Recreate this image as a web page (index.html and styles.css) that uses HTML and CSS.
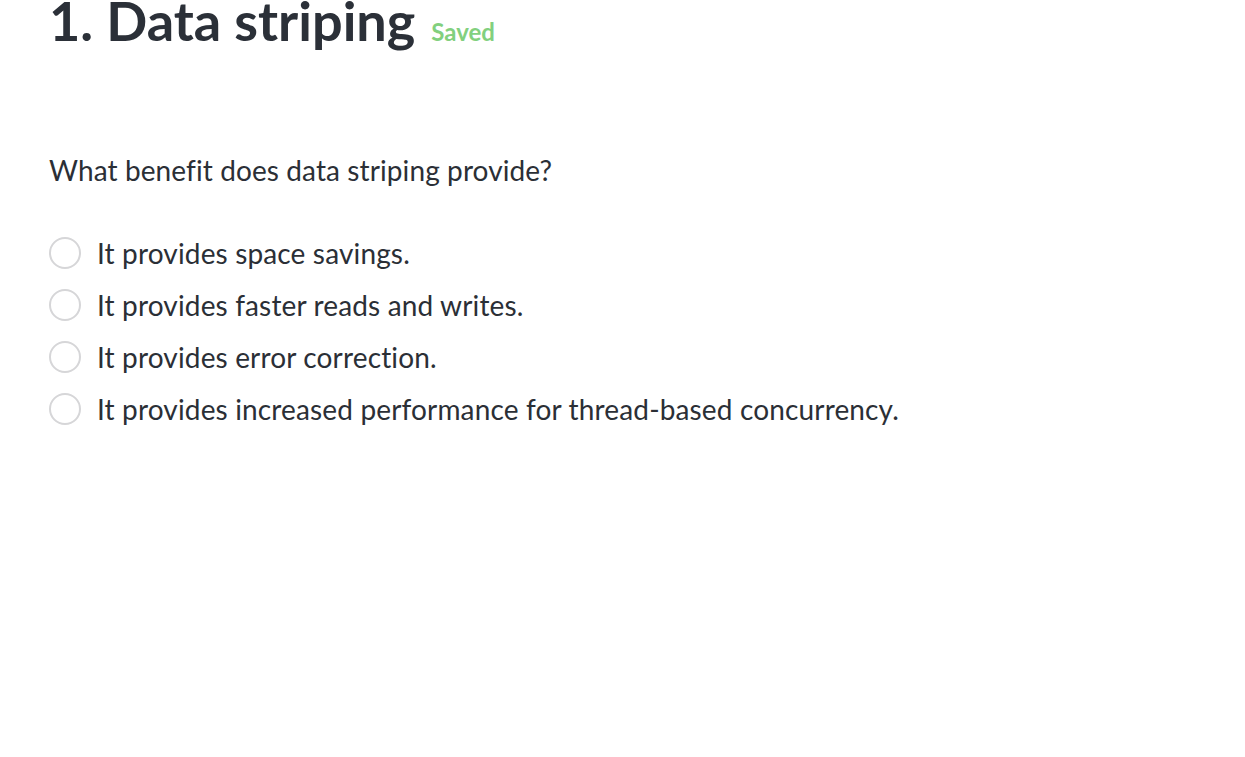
FILE: index.html
```html
<!DOCTYPE html>
<html lang="en">
<head>
    <meta charset="UTF-8">
    <title>Quiz</title>
    <link rel="stylesheet" href="styles.css">
</head>
<body>
    <div class="quiz">
        <div class="quiz-header">
            <h1 class="quiz-title">1. Data striping</h1>
            <span class="quiz-status">Saved</span>
        </div>
        <p class="quiz-question">What benefit does data striping provide?</p>
        <div class="quiz-options">
            <label class="option"><span class="radio"></span>It provides space savings.</label>
            <label class="option"><span class="radio"></span>It provides faster reads and writes.</label>
            <label class="option"><span class="radio"></span>It provides error correction.</label>
            <label class="option"><span class="radio"></span>It provides increased performance for thread-based concurrency.</label>
        </div>
    </div>
</body>
</html>
```

FILE: styles.css
```css
* {
    margin: 0;
    padding: 0;
    box-sizing: border-box;
}

body {
    background: #ffffff;
    font-family: 'Lato', sans-serif;
    color: #2b2f36;
}

.quiz {
    padding: 0 49px;
}

.quiz-header {
    display: flex;
    align-items: baseline;
    gap: 16px;
    margin-top: -14px;
}

.quiz-title {
    font-size: 54px;
    font-weight: 700;
    line-height: 70px;
    color: #2b3038;
}

.quiz-status {
    font-size: 24px;
    font-weight: 700;
    color: #82d07e;
}

.quiz-question {
    font-size: 28px;
    letter-spacing: 0.1px;
    line-height: 36px;
    margin-top: 96px;
}

.quiz-options {
    display: flex;
    flex-direction: column;
    gap: 16px;
    margin-top: 47px;
}

.option {
    display: flex;
    align-items: center;
    gap: 16px;
    font-size: 28px;
    letter-spacing: 0.15px;
    line-height: 36px;
}

.radio {
    width: 32px;
    height: 32px;
    border: 2px solid #d6d6d8;
    border-radius: 50%;
    flex-shrink: 0;
}
```
